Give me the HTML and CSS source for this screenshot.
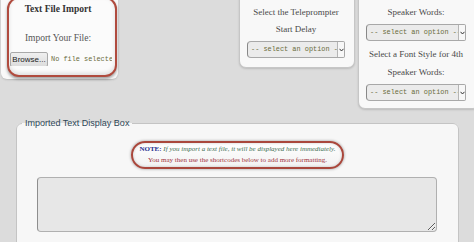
FILE: index.html
```html
<!DOCTYPE html>
<html lang="en">
<head>
<meta charset="utf-8">
<title>Teleprompter Setup</title>
<link rel="stylesheet" href="styles.css">
</head>
<body>
<div class="top-row">
  <div class="import-panel">
    <div class="red-box">
      <div class="panel-title">Text File Import</div>
      <div class="import-label">Import Your File:</div>
      <div class="file-row">
        <button class="browse-btn" type="button">Browse...</button>
        <span class="file-name">No file selected.</span>
      </div>
    </div>
  </div>

  <div class="panel panel-delay">
    <p class="panel-text">Select the Teleprompter<br>Start Delay</p>
    <div class="select">
      <span class="select-text">-- select an option --</span>
      <span class="select-arrow"><svg width="5" height="4" viewBox="0 0 5 4"><path d="M0.5 0.8 L2.5 3 L4.5 0.8" fill="none" stroke="#333" stroke-width="1"/></svg></span>
    </div>
  </div>

  <div class="panel panel-font">
    <p class="panel-text">Speaker Words:</p>
    <div class="select">
      <span class="select-text">-- select an option --</span>
      <span class="select-arrow"><svg width="5" height="4" viewBox="0 0 5 4"><path d="M0.5 0.8 L2.5 3 L4.5 0.8" fill="none" stroke="#333" stroke-width="1"/></svg></span>
    </div>
    <p class="panel-text second">Select a Font Style for 4th<br>Speaker Words:</p>
    <div class="select">
      <span class="select-text">-- select an option --</span>
      <span class="select-arrow"><svg width="5" height="4" viewBox="0 0 5 4"><path d="M0.5 0.8 L2.5 3 L4.5 0.8" fill="none" stroke="#333" stroke-width="1"/></svg></span>
    </div>
  </div>
</div>

<fieldset class="display-box">
  <legend class="display-legend">Imported Text Display Box</legend>
  <div class="note">
    <span class="note-label">NOTE:</span> <em class="note-green">If you import a text file, it will be displayed here immediately.</em><br>
    <span class="note-red">You may then use the shortcodes below to add more formatting.</span>
  </div>
  <textarea class="display-area"></textarea>
</fieldset>
</body>
</html>
```
FILE: styles.css
```css
* { box-sizing: border-box; }

html, body {
  margin: 0;
  padding: 0;
}

body {
  width: 474px;
  height: 242px;
  overflow: hidden;
  background: #dcdcdc;
  font-family: "Liberation Serif", "DejaVu Serif", serif;
}

.top-row {
  display: flex;
  align-items: flex-start;
  margin-top: -20px;
  width: 600px;
}

.import-panel {
  margin-left: 1px;
  width: 117px;
  background: #f9f9f9;
  padding: 17px 0 2px 6px;
  border-radius: 0 0 6px 6px;
  box-shadow: 0 1px 2px rgba(0,0,0,0.15);
}

.red-box {
  width: 110px;
  border: 2px solid #b04b3e;
  border-radius: 12px;
  padding: 4px 8px 9px 0;
  background: #fbfbfb;
  box-shadow: 0 2px 3px rgba(0,0,0,0.35), inset 0 -2px 4px rgba(0,0,0,0.12);
  text-align: center;
  color: #3b3b3b;
}

.panel-title {
  font-weight: bold;
  font-size: 9.5px;
  line-height: 12px;
  color: #333;
}

.import-label {
  margin-top: 17px;
  font-size: 9.5px;
  line-height: 12px;
  color: #555;
}

.file-row {
  margin-top: 8px;
  display: flex;
  align-items: center;
  height: 14px;
  white-space: nowrap;
  overflow: hidden;
  width: 103px;
}

.browse-btn {
  flex: none;
  margin: 0 0 0 1px;
  width: 38px;
  height: 15px;
  padding: 0;
  font-family: "Liberation Sans", Arial, sans-serif;
  font-size: 8px;
  color: #222;
  background: linear-gradient(#f0f0f0, #dcdcdc);
  border: 1px solid #a9a9a9;
  border-radius: 2px;
}

.file-name {
  margin-left: 3px;
  font-family: "Liberation Mono", monospace;
  font-size: 6.9px;
  color: #6a6b3c;
}

.panel {
  background: #f8f8f8;
  border: 1px solid #c6c6c6;
  border-radius: 0 0 7px 7px;
  box-shadow: 0 1px 2px rgba(0,0,0,0.15);
  text-align: center;
}

.panel-delay {
  margin-left: 121px;
  width: 116px;
  padding: 23px 9px 9px 7px;
}

.panel-font {
  margin-left: 3px;
  width: 122px;
  padding: 23px 13px 7px 7px;
}

.panel-text {
  margin: 0;
  font-size: 9px;
  line-height: 17px;
  color: #4a4a4a;
}

.panel-text.second {
  margin-top: 4px;
  line-height: 18px;
}

.select {
  display: flex;
  height: 17px;
  margin-top: 3px;
  border: 1px solid #a8a8a8;
  border-left-color: #888;
  border-radius: 4px 2px 2px 4px;
  background: #ebebeb;
  overflow: hidden;
}

.select-text {
  flex: 1;
  overflow: hidden;
  white-space: nowrap;
  text-align: left;
  padding-left: 3px;
  font-family: "Liberation Mono", monospace;
  font-size: 6.9px;
  line-height: 15px;
  color: #6a6b3c;
}

.select-arrow {
  flex: none;
  width: 7px;
  display: flex;
  align-items: center;
  justify-content: center;
  background: #f7f7f7;
  border-left: 1px solid #b5b5b5;
}

.display-box {
  margin: 8px 15px 0 16px;
  padding: 0 0 20px 0;
  border: 1px solid #c4c4c4;
  border-radius: 6px;
  background: #f7f7f7;
  min-width: 0;
}

.display-legend {
  margin-left: 5px;
  padding: 0 3px;
  font-family: "Liberation Sans", Arial, sans-serif;
  font-size: 9px;
  line-height: 12px;
  color: #2f4858;
}

.note {
  width: 213px;
  height: 28px;
  margin: 12px auto 0;
  padding-top: 1px;
  border: 2px solid #a9473c;
  border-radius: 14px;
  background: linear-gradient(#ffffff, #f2f2f2);
  box-shadow: 0 0 3px rgba(0,0,0,0.4), inset 0 0 3px rgba(0,0,0,0.2);
  text-align: center;
  font-size: 7px;
  line-height: 11px;
  white-space: nowrap;
}

.note-label {
  font-weight: bold;
  color: #1f2f8f;
}

.note-green {
  color: #3f6e52;
}

.note-red {
  color: #a0343c;
}

.display-area {
  display: block;
  margin: 8px 0 0 20px;
  width: 400px;
  height: 55px;
  background: #e7e7e7;
  border: 1px solid #b0b0b0;
  border-left-color: #8e8e8e;
  border-radius: 4px;
}
```
